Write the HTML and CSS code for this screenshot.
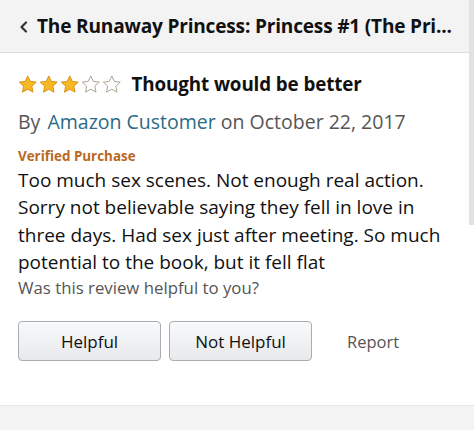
FILE: index.html
```html
<!DOCTYPE html>
<html>
<head>
<meta charset="utf-8">
<link rel="stylesheet" href="styles.css">
</head>
<body>
<div class="page">
  <header class="topbar">
    <svg class="chev" width="9" height="12" viewBox="0 0 9 12"><path d="M7 1.5 L2.5 6 L7 10.5" fill="none" stroke="#333" stroke-width="2.2" stroke-linecap="round" stroke-linejoin="round"/></svg>
    <h1 class="title">The Runaway Princess: Princess #1 (The Pri...</h1>
  </header>
  <main class="review">
    <div class="headline">
      <div class="stars">
        <svg class="star" viewBox="0 0 20 19"><path class="full" d="M10 1 L12.6 6.6 L18.7 7.3 L14.2 11.5 L15.4 17.6 L10 14.6 L4.6 17.6 L5.8 11.5 L1.3 7.3 L7.4 6.6 Z"/></svg>
        <svg class="star" viewBox="0 0 20 19"><path class="full" d="M10 1 L12.6 6.6 L18.7 7.3 L14.2 11.5 L15.4 17.6 L10 14.6 L4.6 17.6 L5.8 11.5 L1.3 7.3 L7.4 6.6 Z"/></svg>
        <svg class="star" viewBox="0 0 20 19"><path class="full" d="M10 1 L12.6 6.6 L18.7 7.3 L14.2 11.5 L15.4 17.6 L10 14.6 L4.6 17.6 L5.8 11.5 L1.3 7.3 L7.4 6.6 Z"/></svg>
        <svg class="star" viewBox="0 0 20 19"><path class="empty" d="M10 1 L12.6 6.6 L18.7 7.3 L14.2 11.5 L15.4 17.6 L10 14.6 L4.6 17.6 L5.8 11.5 L1.3 7.3 L7.4 6.6 Z"/></svg>
        <svg class="star" viewBox="0 0 20 19"><path class="empty" d="M10 1 L12.6 6.6 L18.7 7.3 L14.2 11.5 L15.4 17.6 L10 14.6 L4.6 17.6 L5.8 11.5 L1.3 7.3 L7.4 6.6 Z"/></svg>
      </div>
      <h2 class="rtitle">Thought would be better</h2>
    </div>
    <p class="byline">By <a class="author">Amazon Customer</a> on October 22, 2017</p>
    <p class="verified">Verified Purchase</p>
    <p class="body">Too much sex scenes. Not enough real action. Sorry not believable saying they fell in love in three days. Had sex just after meeting. So much potential to the book, but it fell flat</p>
    <p class="ask">Was this review helpful to you?</p>
    <div class="actions">
      <button class="btn">Helpful</button>
      <button class="btn">Not Helpful</button>
      <span class="report">Report</span>
    </div>
  </main>
  <footer class="footband"></footer>
  <div class="scrollthumb"></div>
</div>
</body>
</html>
```
FILE: styles.css
```css
html, body {
  margin: 0;
  padding: 0;
  background: #ffffff;
}
body {
  font-family: "Open Sans", "Noto Sans", "Liberation Sans", sans-serif;
  color: #111;
  width: 474px;
  height: 430px;
  overflow: hidden;
}
.page {
  position: relative;
  height: 430px;
  display: flex;
  flex-direction: column;
}
.topbar {
  height: 53px;
  flex: none;
  box-sizing: border-box;
  background: #f3f3f3;
  border-bottom: 1px solid #dedede;
  display: flex;
  align-items: center;
  padding-left: 19px;
  gap: 9px;
}
.chev {
  flex: none;
  margin-top: 1px;
}
.title {
  margin: 0;
  font-size: 19.1px;
  font-weight: 700;
  color: #111;
  letter-spacing: -0.2px;
  white-space: nowrap;
}
.review {
  flex: 1;
  padding: 21px 14px 0 18px;
}
.headline {
  display: flex;
  align-items: center;
  gap: 10px;
  height: 20px;
}
.stars {
  display: flex;
  gap: 1.5px;
}
.star {
  width: 19.5px;
  height: 18.5px;
  display: block;
}
.full {
  fill: #f8b826;
  stroke: #d98f10;
  stroke-width: 1;
  stroke-linejoin: round;
}
.empty {
  fill: #fff;
  stroke: #a9a08c;
  stroke-width: 1;
  stroke-linejoin: round;
}
.rtitle {
  margin: 0;
  font-size: 18.8px;
  font-weight: 700;
  color: #111;
  letter-spacing: -0.1px;
}
.byline {
  margin: 15px 0 0 0;
  font-size: 19.5px;
  line-height: 26px;
  color: #555;
}
.author {
  color: #2c6a87;
  margin-left: 2px;
}
.verified {
  margin: 12px 0 0 0;
  font-size: 13.4px;
  line-height: 18px;
  font-weight: 700;
  color: #b8681f;
}
.body {
  margin: 2px 0 0 0;
  font-size: 19px;
  line-height: 27.3px;
  color: #111;
}
.ask {
  margin: 1px 0 0 0;
  font-size: 16.8px;
  line-height: 21px;
  color: #555;
}
.actions {
  display: flex;
  align-items: center;
  gap: 8px;
  margin-top: 23px;
}
.btn {
  width: 143px;
  height: 40px;
  box-sizing: border-box;
  border: 1px solid #a9acb1;
  border-radius: 4px;
  background: linear-gradient(#f8f9fa, #e8e9eb);
  font-family: inherit;
  font-size: 17px;
  color: #111;
  box-shadow: 0 1px 0 rgba(255,255,255,0.6) inset;
}
.report {
  margin-left: 27px;
  font-size: 16.5px;
  color: #555;
}
.footband {
  height: 24px;
  flex: none;
  background: #f3f3f3;
  border-top: 1px solid #e6e6e6;
}
.scrollthumb {
  position: absolute;
  right: 0;
  top: 0;
  width: 5px;
  height: 225px;
  background: #e2e2e2;
}
```
